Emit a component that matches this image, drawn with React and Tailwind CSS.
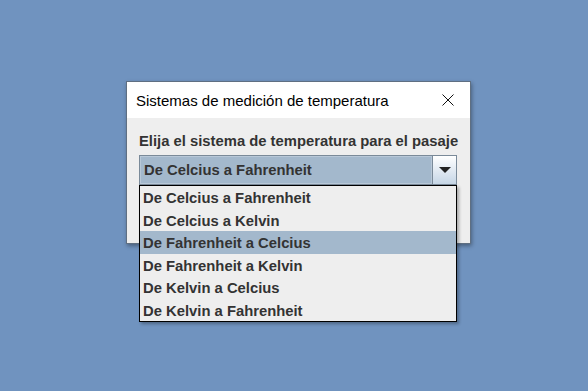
import React from 'react';

const options = [
  'De Celcius a Fahrenheit',
  'De Celcius a Kelvin',
  'De Fahrenheit a Celcius',
  'De Fahrenheit a Kelvin',
  'De Kelvin a Celcius',
  'De Kelvin a Fahrenheit',
];

const CloseIcon = () => (
  <svg width="12" height="12" viewBox="0 0 12 12" className="block">
    <path d="M0.5 0.5 L11.5 11.5 M11.5 0.5 L0.5 11.5" stroke="#111" strokeWidth="1" fill="none" />
  </svg>
);

export default function App() {
  const hovered = 2;

  return (
    <div className="relative w-[588px] h-[391px] overflow-hidden bg-[#7093bf] font-['Liberation_Sans',Arial,sans-serif]">
      {/* dialog window */}
      <div className="absolute left-[126px] top-[81px] w-[345px] h-[163px] flex flex-col border border-[#5f6f82] bg-[#eeeeee] shadow-[1px_2px_4px_rgba(0,0,0,0.35)]">
        <div className="h-[36px] shrink-0 flex items-center justify-between bg-white pl-[9px] pr-[16px]">
          <span className="text-[15px] text-black leading-none">Sistemas de medición de temperatura</span>
          <CloseIcon />
        </div>

        <div className="flex flex-col pl-[12px] pr-[13px] pt-[15px]">
          <div className="text-[14.8px] font-bold text-[#333333] leading-[17px] whitespace-nowrap">
            Elija el sistema de temperatura para el pasaje
          </div>

          <div className="relative mt-[5px]">
            <div className="h-[30px] flex border border-[#7a8a99] bg-[#a3b8cc]">
              <div className="flex-1 flex items-center pl-[3px] border border-[#b8c8d8]">
                <span className="text-[14.8px] font-bold text-[#333333]">De Celcius a Fahrenheit</span>
              </div>
              <div className="w-[24px] flex items-center justify-center border-l border-[#7a8a99] bg-gradient-to-b from-white to-[#c6d6e6]">
                <svg width="12" height="6" viewBox="0 0 12 6" className="block">
                  <path d="M0 0 L12 0 L6 6 Z" fill="#222" />
                </svg>
              </div>
            </div>

            {/* open popup list */}
            <div className="absolute left-0 top-full w-[318px] flex flex-col border border-black bg-[#eeeeee] shadow-[2px_2px_3px_rgba(0,0,0,0.3)] z-10">
              {options.map((opt, i) => (
                <div
                  key={opt}
                  className={`h-[22.5px] flex items-center pl-[3px] pt-[2px] text-[14.8px] font-bold text-[#333333] ${
                    i === hovered ? 'bg-[#a3b8cc]' : ''
                  }`}
                >
                  {opt}
                </div>
              ))}
            </div>
          </div>
        </div>
      </div>
    </div>
  );
}
